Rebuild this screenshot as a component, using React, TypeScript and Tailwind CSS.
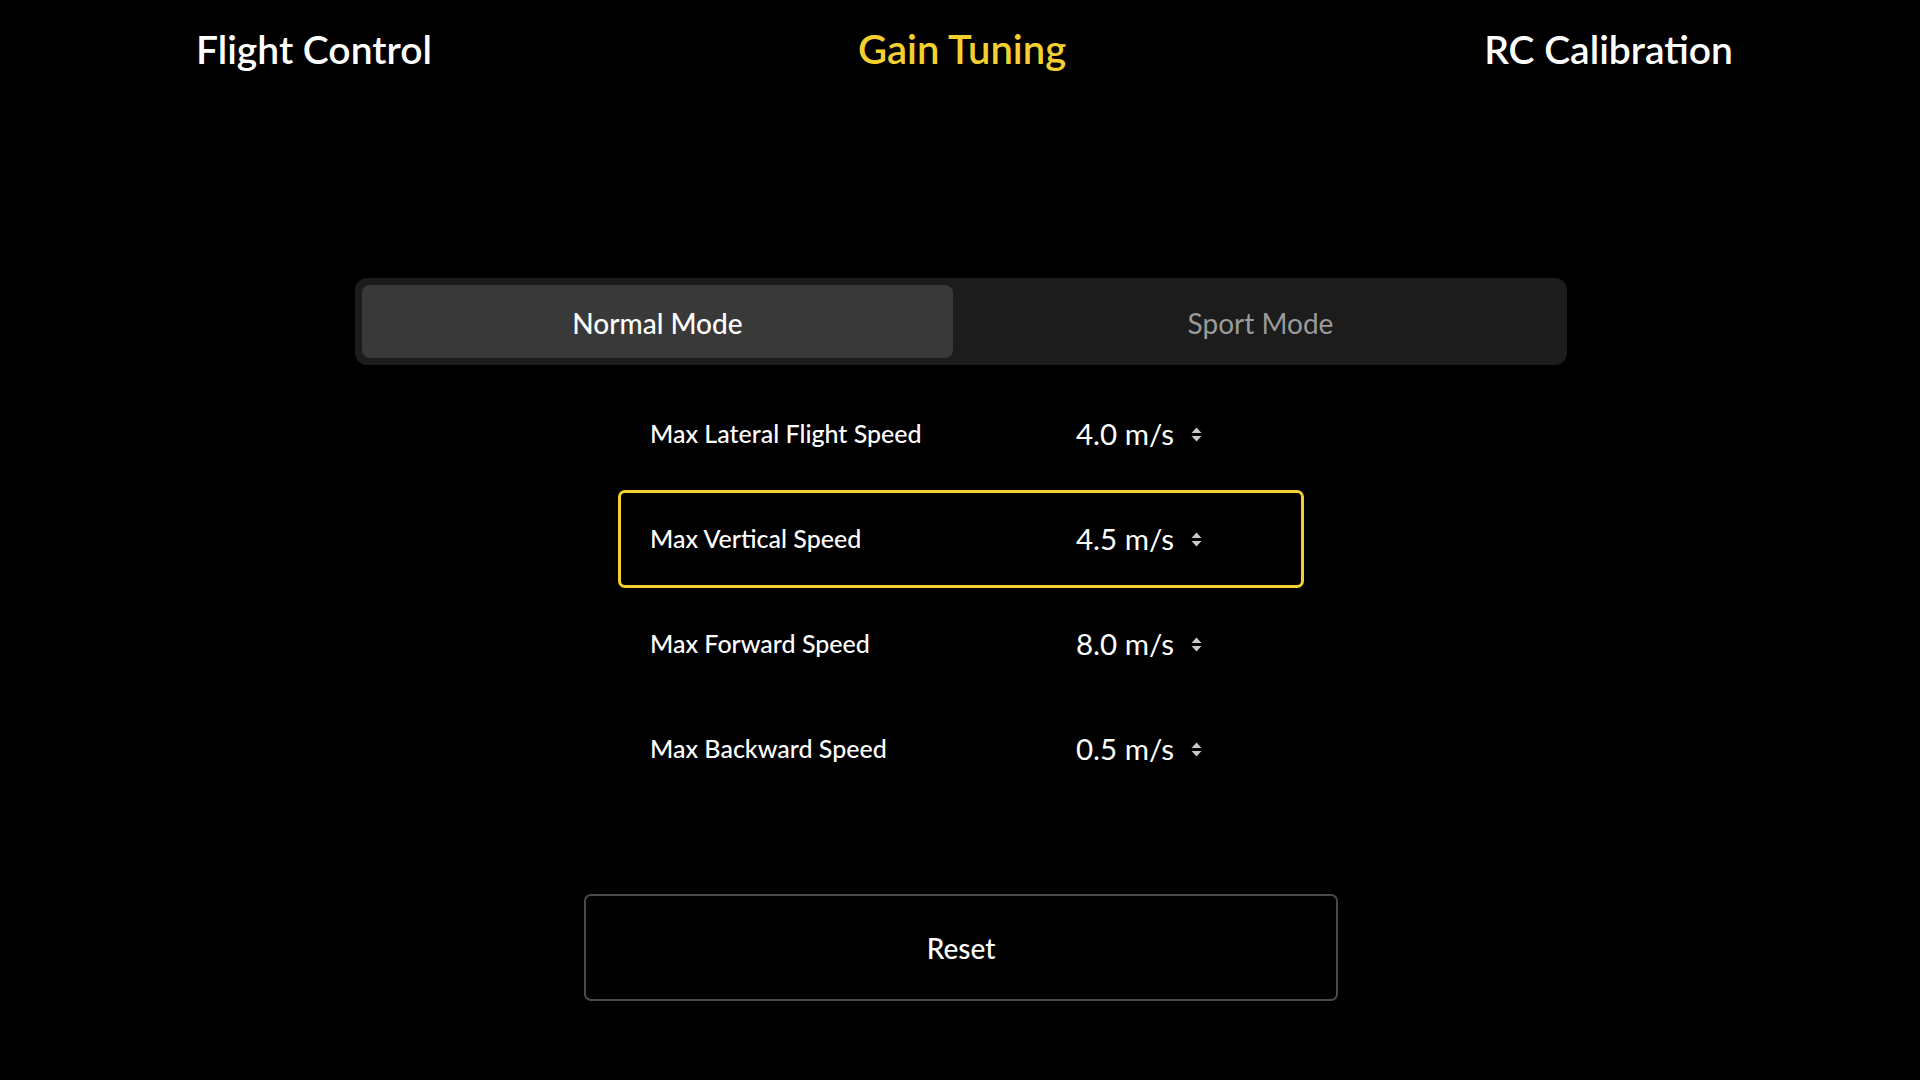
import React from "react";

const rows = [
  { label: "Max Lateral Flight Speed", value: "4.0 m/s", active: false },
  { label: "Max Vertical Speed", value: "4.5 m/s", active: true },
  { label: "Max Forward Speed", value: "8.0 m/s", active: false },
  { label: "Max Backward Speed", value: "0.5 m/s", active: false },
];

function UpDown() {
  return (
    <svg width="11" height="15" viewBox="0 0 11 15" className="shrink-0">
      <path d="M5.5 0.5 L10.5 6 L0.5 6 Z" fill="#c8c8c8" />
      <path d="M0.5 9 L10.5 9 L5.5 14.5 Z" fill="#c8c8c8" />
    </svg>
  );
}

export default function App() {
  return (
    <div
      className="w-[1920px] h-[1080px] bg-black text-white overflow-hidden flex flex-col"
      style={{ fontFamily: "Lato, 'Noto Sans', sans-serif" }}
    >
      <div className="flex justify-between items-center pl-[196px] pr-[187px] pt-[24px] h-[73px]">
        <span className="text-[39px] leading-[48px] font-semibold">Flight Control</span>
        <span className="text-[40px] leading-[48px] font-semibold text-[#f3d02f] ml-[8px]">Gain Tuning</span>
        <span className="text-[39px] leading-[48px] font-semibold">RC Calibration</span>
      </div>

      <div className="flex flex-col items-center">
        <div className="mt-[205px] w-[1212px] h-[87px] bg-[#1c1c1c] rounded-[12px] p-[7px] flex ml-[2px]">
          <div className="w-[591px] h-full bg-[#393939] rounded-[8px] flex items-center justify-center text-[28px] font-medium pt-[3px]">
            Normal Mode
          </div>
          <div className="flex-1 h-full flex items-center justify-center text-[28px] text-[#9a9a9a] pt-[3px] pl-[8px]">
            Sport Mode
          </div>
        </div>

        <div className="mt-[20px] flex flex-col gap-[7px] ml-[2px]">
          {rows.map((r) => (
            <div
              key={r.label}
              className={
                r.active
                  ? "w-[686px] h-[98px] flex items-center pl-[29px] border-[3px] border-[#f3d02f] rounded-[7px]"
                  : "w-[686px] h-[98px] flex items-center pl-[29px] border-[3px] border-transparent"
              }
            >
              <span className="w-[426px] text-[25px] font-medium">{r.label}</span>
              <span className="text-[29.5px] mr-[17px]">{r.value}</span>
              <UpDown />
            </div>
          ))}
        </div>

        <button className="mt-[96px] w-[754px] h-[107px] border-2 border-[#4a4a4a] rounded-[7px] flex items-center justify-center text-[28px] font-medium ml-[2px]">
          Reset
        </button>
      </div>
    </div>
  );
}
